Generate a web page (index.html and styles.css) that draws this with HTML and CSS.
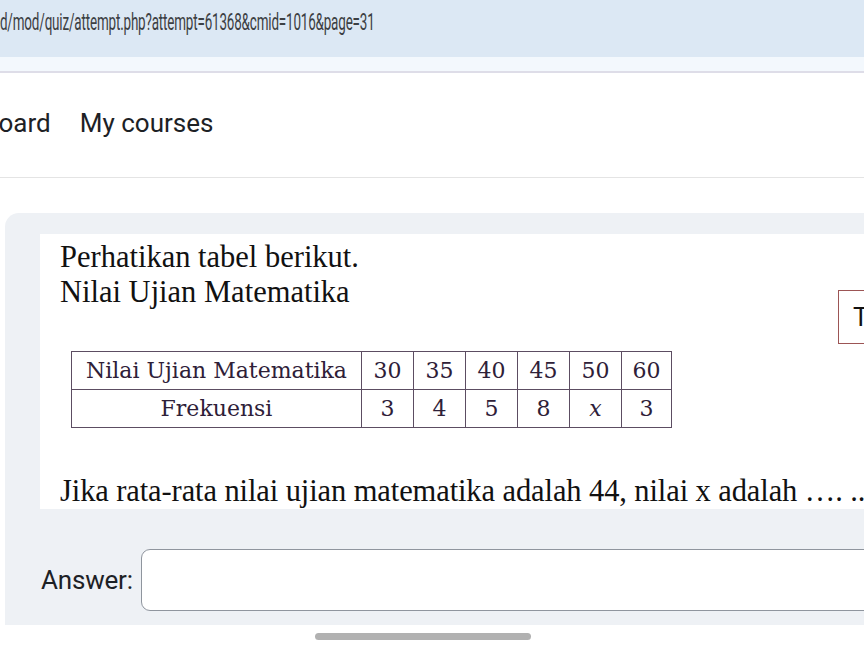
FILE: index.html
```html
<!DOCTYPE html>
<html lang="en">
<head>
<meta charset="UTF-8">
<meta name="viewport" content="width=device-width, initial-scale=1.0">
<title>Quiz attempt</title>
<link rel="stylesheet" href="styles.css">
</head>
<body>

<div class="urlbar">
    <span class="url">ed/mod/quiz/attempt.php?attempt=61368&amp;cmid=1016&amp;page=31</span>
</div>
<div class="urlbar-edge"></div>

<nav class="topnav">
    <a href="#">Dashboard</a>
    <a href="#">My courses</a>
</nav>

<div class="page">
    <div class="que">
        <div class="content">
            <div class="qtext">
                <p>Perhatikan tabel berikut.<br>Nilai Ujian Matematika</p>
                <table class="freq">
                    <tr>
                        <td class="head">Nilai Ujian Matematika</td>
                        <td>30</td><td>35</td><td>40</td><td>45</td><td>50</td><td>60</td>
                    </tr>
                    <tr>
                        <td class="head">Frekuensi</td>
                        <td>3</td><td>4</td><td>5</td><td>8</td><td><i>x</i></td><td>3</td>
                    </tr>
                </table>
                <p class="ask">Jika rata-rata nilai ujian matematika adalah 44, nilai x adalah &hellip;. ..</p>
            </div>
            <div class="flag">Tandai</div>
        </div>
        <div class="answer">
            <label for="ans">Answer:</label>
            <input type="text" id="ans">
        </div>
    </div>
</div>

<div class="scrollbar"></div>

</body>
</html>
```

FILE: styles.css
```css
body {
    margin: 0;
    width: 864px;
    height: 648px;
    overflow: hidden;
    background: #fff;
    font-family: Roboto, "Noto Sans", sans-serif;
    color: #1d2125;
}

.urlbar {
    height: 57px;
    background-color: #dce8f4;
    overflow: hidden;
    white-space: nowrap;
}
.url {
    display: inline-block;
    margin-left: -7px;
    padding-top: 8px;
    font-size: 24px;
    letter-spacing: -0.3px;
    color: #3c4043;
    transform: scaleX(0.56);
    transform-origin: left top;
}
.urlbar-edge {
    height: 14px;
    background-color: #f3f8fd;
    border-bottom: 2px solid #dedde8;
}

.topnav {
    height: 104px;
    display: flex;
    align-items: center;
    gap: 29px;
    margin-left: -75px;
    border-bottom: 1px solid #e4e4e4;
    white-space: nowrap;
}
.topnav a {
    font-size: 26px;
    color: #1d2125;
    text-decoration: none;
    margin-top: -5px;
}

.page {
    padding: 35px 0 0 5px;
}
.que {
    width: 900px;
    background-color: #eef1f5;
    border-radius: 14px 0 0 0;
    padding: 21px 0 14px 35px;
}
.content {
    display: flex;
    background: #fff;
    height: 275px;
    overflow: hidden;
}
.qtext {
    padding: 6px 0 0 20px;
    width: 778px;
    flex-shrink: 0;
    font-family: "Liberation Serif", "Times New Roman", serif;
    color: #111;
    white-space: nowrap;
}
.qtext p {
    margin: 0;
    font-size: 30.5px;
    line-height: 35px;
}
.qtext .ask {
    margin-top: 46px;
    letter-spacing: -0.1px;
}

.freq {
    margin: 41px 0 0 11px;
    border-collapse: collapse;
    font-family: "DejaVu Serif", serif;
    font-size: 22px;
    color: #2e2038;
}
.freq td {
    border: 1.5px solid #5c4d62;
    height: 37px;
    padding: 0;
    width: 51px;
    text-align: center;
}
.freq td.head {
    width: 289px;
}
.freq td:last-child {
    width: 49px;
}
.freq i {
    font-style: italic;
}

.flag {
    margin-top: 56px;
    height: 52px;
    padding: 0 14px;
    border: 1px solid #9c5555;
    font-size: 26px;
    line-height: 52px;
    color: #111;
}

.answer {
    display: flex;
    align-items: center;
    gap: 8px;
    margin-top: 40px;
    margin-left: 1px;
}
.answer label {
    font-size: 26px;
    letter-spacing: -0.2px;
    color: #1d2125;
}
.answer input {
    width: 760px;
    height: 62px;
    box-sizing: border-box;
    border: 1px solid #8f959e;
    border-radius: 9px;
    background: #fff;
}

.scrollbar {
    width: 216px;
    height: 7px;
    margin: 8px 0 0 315px;
    border-radius: 4px;
    background: #b1b1b1;
}
```
